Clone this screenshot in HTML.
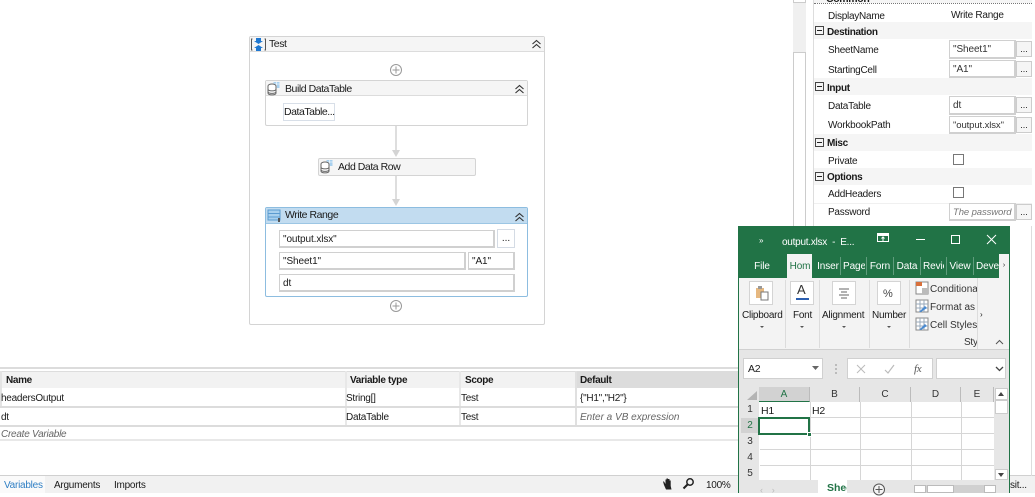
<!DOCTYPE html>
<html><head><meta charset="utf-8"><style>
html,body{margin:0;padding:0}
body{width:1035px;height:493px;overflow:hidden;background:#fff;position:relative;font-family:"Liberation Sans",sans-serif;font-size:10px;color:#1a1a1a}
.a{position:absolute;box-sizing:border-box}
.t{position:absolute;white-space:nowrap;line-height:14px;margin-top:1px;letter-spacing:-.25px}
.d{font-size:10.5px;letter-spacing:-.45px}
.b{font-weight:bold;letter-spacing:-.35px}
.inp{position:absolute;box-sizing:border-box;background:#fff;border:1px solid #d0d0d0;border-width:1px 2px 2px 1px;padding-left:3px;line-height:17px;white-space:nowrap;overflow:hidden;letter-spacing:-.1px}
.btn{position:absolute;box-sizing:border-box;background:#fafafa;border:1px solid #d4dbe4;text-align:center;line-height:14px}
.cat{position:absolute;left:814px;width:218px;background:#f5f5f5;height:17px}
.box{position:absolute;left:815px;width:9px;height:9px;border:1px solid #444;box-sizing:border-box}
.box:after{content:"";position:absolute;left:1px;top:3px;width:5px;height:1px;background:#222}
.chk{position:absolute;left:953px;width:11px;height:11px;border:1px solid #777;background:#fff;box-sizing:border-box}
.ab{position:absolute;left:1016px;width:16px;height:16px;box-sizing:border-box;background:#f5f5f5;border:1px solid #ccc;text-align:center;line-height:14px;font-size:9px}
.tab{position:absolute;top:255px;height:23px;color:#fff;line-height:23px;font-size:10px;white-space:nowrap;overflow:hidden;text-align:center;letter-spacing:-.1px}
.sep{position:absolute;width:1px;background:#5f9c7c;top:257px;height:18px}
.rb{position:absolute;top:281px;width:24px;height:24px;box-sizing:border-box;background:#fff;border:1px solid #d4d4d4}
.hl{position:absolute;left:760px;width:234px;height:1px;background:#d6d6d6}
.vl{position:absolute;top:402px;width:1px;height:78px;background:#d6d6d6}
.rh{position:absolute;left:741px;width:18px;height:15px;text-align:center;font-size:10px;line-height:15px;background:#e6e6e6;color:#333}
.ch{position:absolute;top:387px;height:15px;text-align:center;line-height:15px;font-size:10px;color:#333;background:#e6e6e6;border-right:1px solid #bbb;box-sizing:border-box}
</style></head><body>

<!-- Designer -->
<div class="a" style="left:249px;top:36px;width:296px;height:289px;border:1px solid #d4d4d4;border-radius:2px"></div>
<div class="a" style="left:250px;top:37px;width:294px;height:15px;background:#f5f5f5;border-bottom:1px solid #dcdcdc"></div>
<svg class="a" style="left:251px;top:37px" width="15" height="15"><path d="M1.500 2H0.500V13H1.500M13.500 2H14.500V13H13.500" stroke="#555" fill="none"/><path d="M5 1h5v3h2L7.500 7 3 4h2z M5 14v-3H3l4.500-3 4.500 3h-2v3z" fill="#1f78d1"/></svg>
<div class="t d" style="left:269px;top:36px">Test</div>
<svg class="a" style="left:531px;top:39px" width="11" height="10"><path d="M1.500 5L5.500 1.500 9.500 5M1.500 9L5.500 5.500 9.500 9" stroke="#333" fill="none" stroke-width="1.100"/></svg>
<svg class="a" style="left:389px;top:63px" width="14" height="14"><circle cx="7" cy="7" r="5.500" stroke="#999" fill="#fff"/><path d="M3.500 7h7M7 3.500v7" stroke="#999"/></svg>

<div class="a" style="left:265px;top:80px;width:263px;height:46px;border:1px solid #d4d4d4;border-radius:2px;background:#fff"></div>
<div class="a" style="left:266px;top:81px;width:261px;height:15px;background:#f5f5f5;border-bottom:1px solid #dcdcdc"></div>
<svg class="a" style="left:267px;top:81px" width="14" height="15"><rect x="6.500" y="1" width="6" height="6" fill="#a8d0ee"/><path d="M6.500 3h6M9.500 1v6" stroke="#fff" stroke-width=".6"/><ellipse cx="5" cy="5" rx="4" ry="2" fill="#fff" stroke="#666"/><path d="M1 5v7c0 2.500 8 2.500 8 0V5M1 8c0 2.500 8 2.500 8 0M1 10.500c0 2.500 8 2.500 8 0" stroke="#666" fill="#fff"/></svg>
<div class="t d" style="left:285px;top:81px">Build DataTable</div>
<svg class="a" style="left:514px;top:84px" width="11" height="10"><path d="M1.500 5L5.500 1.500 9.500 5M1.500 9L5.500 5.500 9.500 9" stroke="#333" fill="none" stroke-width="1.100"/></svg>
<div class="btn" style="left:283px;top:103px;width:52px;height:18px;line-height:17px;background:#fff;font-size:10.500px;border-color:#d8dfe8;letter-spacing:-.45px">DataTable...</div>

<div class="a" style="left:395px;top:126px;width:2px;height:26px;background:#dedede"></div>
<svg class="a" style="left:391px;top:149px" width="10" height="9"><path d="M1 1h8L5 8z" fill="#d4d4d4"/></svg>

<div class="a" style="left:318px;top:158px;width:158px;height:18px;background:#f5f5f5;border:1px solid #d4d4d4;border-radius:2px"></div>
<svg class="a" style="left:320px;top:159px" width="14" height="15"><rect x="6.500" y="1" width="6" height="6" fill="#a8d0ee"/><path d="M6.500 3h6M9.500 1v6" stroke="#fff" stroke-width=".6"/><ellipse cx="5" cy="5" rx="4" ry="2" fill="#fff" stroke="#666"/><path d="M1 5v7c0 2.500 8 2.500 8 0V5M1 8c0 2.500 8 2.500 8 0M1 10.500c0 2.500 8 2.500 8 0" stroke="#666" fill="#fff"/></svg>
<div class="t d" style="left:338px;top:159px">Add Data Row</div>

<div class="a" style="left:395px;top:176px;width:2px;height:24px;background:#dedede"></div>
<svg class="a" style="left:391px;top:198px" width="10" height="9"><path d="M1 1h8L5 8z" fill="#d4d4d4"/></svg>

<div class="a" style="left:265px;top:207px;width:263px;height:90px;border:1px solid #8dbde0;border-radius:2px;background:#fff"></div>
<div class="a" style="left:266px;top:208px;width:261px;height:16px;background:#c2dcf0;border-bottom:1px solid #9cc6e4"></div>
<svg class="a" style="left:267px;top:209px" width="14" height="14"><rect x="1" y="1" width="12" height="10" fill="#a8d0ee" stroke="#5b9bd0"/><path d="M1 4.500h12M1 8h12" stroke="#5b9bd0"/><rect x="11" y="9" width="2" height="4" fill="#555"/></svg>
<div class="t d" style="left:285px;top:207px">Write Range</div>
<svg class="a" style="left:514px;top:212px" width="11" height="10"><path d="M1.500 5L5.500 1.500 9.500 5M1.500 9L5.500 5.500 9.500 9" stroke="#333" fill="none" stroke-width="1.100"/></svg>
<div class="inp" style="left:279px;top:230px;width:216px;height:18px">"output.xlsx"</div>
<div class="btn" style="left:497px;top:229px;width:18px;height:19px;line-height:18px;background:#fff">...</div>
<div class="inp" style="left:279px;top:252px;width:187px;height:18px">"Sheet1"</div>
<div class="inp" style="left:468px;top:252px;width:47px;height:18px">"A1"</div>
<div class="inp" style="left:279px;top:274px;width:236px;height:18px">dt</div>
<svg class="a" style="left:389px;top:299px" width="14" height="14"><circle cx="7" cy="7" r="5.500" stroke="#999" fill="#fff"/><path d="M3.500 7h7M7 3.500v7" stroke="#999"/></svg>

<!-- Properties panel -->
<div class="a" style="left:793px;top:0;width:13px;height:250px;background:#f0f0f0"></div>
<div class="a" style="left:793px;top:52px;width:13px;height:200px;background:#fff;border:1px solid #ccc;border-bottom:0"></div>
<div class="a" style="left:793px;top:-5px;width:13px;height:8px;background:#fff;border:1px solid #ccc"></div>
<div class="a" style="left:813px;top:0;width:219px;height:226px;background:#fff;border-left:1px solid #ddd"></div>
<div class="a" style="left:814px;top:3px;width:218px;height:1px;border-top:1px dotted #777"></div>
<div class="cat" style="top:0;height:3px"></div>
<div class="t b" style="left:826px;top:-9px;font-size:10.500px">Common</div>

<div class="t" style="left:828px;top:9px">DisplayName</div>
<div class="t" style="left:951px;top:8px">Write Range</div>

<div class="cat" style="top:22px"></div><div class="box" style="top:26px"></div>
<div class="t b" style="left:827px;top:25px">Destination</div>
<div class="t" style="left:828px;top:43px">SheetName</div>
<div class="inp" style="left:949px;top:40px;width:67px;height:19px;line-height:18px;color:#333">"Sheet1"</div><div class="ab" style="top:41px">...</div>
<div class="t" style="left:828px;top:63px">StartingCell</div>
<div class="inp" style="left:949px;top:60px;width:67px;height:18px;line-height:17px;color:#333">"A1"</div><div class="ab" style="top:61px">...</div>
<div class="cat" style="top:78px"></div><div class="box" style="top:82px"></div>
<div class="t b" style="left:827px;top:81px">Input</div>
<div class="t" style="left:828px;top:99px">DataTable</div>
<div class="inp" style="left:949px;top:96px;width:67px;height:19px;line-height:18px;color:#333">dt</div><div class="ab" style="top:97px">...</div>
<div class="t" style="left:828px;top:118px">WorkbookPath</div>
<div class="inp" style="left:949px;top:116px;width:67px;height:18px;line-height:17px;color:#333;font-size:9.500px">"output.xlsx"</div><div class="ab" style="top:117px">...</div>
<div class="cat" style="top:134px"></div><div class="box" style="top:138px"></div>
<div class="t b" style="left:827px;top:136px">Misc</div>
<div class="t" style="left:828px;top:154px">Private</div>
<div class="chk" style="top:154px"></div>
<div class="cat" style="top:168px"></div><div class="box" style="top:172px"></div>
<div class="t b" style="left:827px;top:170px">Options</div>
<div class="t" style="left:828px;top:187px">AddHeaders</div>
<div class="chk" style="top:187px"></div>
<div class="a" style="left:814px;top:203px;width:218px;height:1px;background:#f0f0f0"></div>
<div class="t" style="left:828px;top:205px">Password</div>
<div class="inp" style="left:949px;top:203px;width:67px;height:18px;line-height:17px;font-style:italic;color:#777;font-size:9.500px">The password</div><div class="ab" style="top:204px">...</div>

<!-- Variables panel -->
<div class="a" style="left:0;top:367px;width:740px;height:2px;background:#dcdcdc"></div>
<div class="a" style="left:0;top:371px;width:740px;height:17px;background:#f2f2f2;border-top:1px solid #ddd"></div>
<div class="a" style="left:575px;top:371px;width:165px;height:17px;background:#dcdcdc"></div>
<div class="a" style="left:0;top:371px;width:2px;height:35px;background:#e4e4e4"></div>
<div class="t b" style="left:6px;top:373px">Name</div>
<div class="t b" style="left:350px;top:373px">Variable type</div>
<div class="t b" style="left:465px;top:373px">Scope</div>
<div class="t b" style="left:580px;top:373px">Default</div>
<div class="a" style="left:345px;top:371px;width:2px;height:55px;background:#e8e8e8"></div>
<div class="a" style="left:459px;top:371px;width:2px;height:55px;background:#e8e8e8"></div>
<div class="a" style="left:575px;top:371px;width:2px;height:55px;background:#e0e0e0"></div>
<div class="a" style="left:0;top:406px;width:740px;height:2px;background:#dcdcdc"></div>
<div class="a" style="left:0;top:425px;width:740px;height:2px;background:#dcdcdc"></div>
<div class="a" style="left:0;top:439px;width:740px;height:2px;background:#e8e8e8"></div>
<div class="t" style="left:1px;top:391px">headersOutput</div>
<div class="t" style="left:346px;top:391px">String[]</div>
<div class="t" style="left:461px;top:391px">Test</div>
<div class="t" style="left:580px;top:391px">{"H1","H2"}</div>
<div class="t" style="left:1px;top:410px">dt</div>
<div class="t" style="left:346px;top:410px">DataTable</div>
<div class="t" style="left:461px;top:410px">Test</div>
<div class="t" style="left:580px;top:410px;font-style:italic;color:#666;letter-spacing:0">Enter a VB expression</div>
<div class="t" style="left:1px;top:427px;font-style:italic;color:#666">Create Variable</div>

<div class="a" style="left:0;top:475px;width:1035px;height:18px;background:#f1f1f1;border-top:1px solid #d0d0d0"></div>
<div class="a" style="left:0;top:476px;width:45px;height:17px;background:#fafafa"></div>
<div class="t" style="left:4px;top:477.500px;color:#2f7fc4">Variables</div>
<div class="t" style="left:54px;top:477.500px">Arguments</div>
<div class="t" style="left:114px;top:477.500px">Imports</div>
<svg class="a" style="left:661px;top:477px" width="14" height="14"><path d="M3 8L2 4.500l1 0 1.500 2.500V2.500h1v3.500-4.500h1.500v4.500-4h1.500v4.500-3h1.200v5.500L10.500 12.500H5z" fill="#222"/></svg>
<svg class="a" style="left:682px;top:477px" width="13" height="13"><circle cx="8" cy="5" r="3.200" fill="none" stroke="#222" stroke-width="1.500"/><path d="M5.500 7.500L1.500 11.500" stroke="#222" stroke-width="2"/></svg>
<div class="t" style="left:706px;top:477.500px">100%</div>
<div class="t" style="left:1010px;top:477.500px">sit...</div>
<div class="a" style="left:1031px;top:226px;width:1px;height:250px;background:#ddd"></div>

<!-- Excel window -->
<div class="a" style="left:738px;top:226px;width:272px;height:267px;background:#e6e6e6;border:1px solid #217346"></div>
<div class="a" style="left:739px;top:227px;width:270px;height:51px;background:#217346"></div>
<div class="t" style="left:759px;top:233px;color:#fff;font-size:8px">&#187;</div>
<div class="t" style="left:782px;top:235px;color:#fff;font-size:10px">output.xlsx &nbsp;-&nbsp; E...</div>
<svg class="a" style="left:877px;top:233px" width="12" height="10"><rect x=".5" y=".5" width="11" height="8" fill="none" stroke="#fff"/><rect x="1" y="1" width="10" height="2" fill="#fff"/><path d="M6 8V4M4.500 5.500L6 4l1.500 1.500" stroke="#fff" fill="none"/></svg>
<div class="a" style="left:916px;top:239px;width:9px;height:1px;background:#fff"></div>
<div class="a" style="left:951px;top:235px;width:9px;height:9px;border:1px solid #fff"></div>
<svg class="a" style="left:986px;top:234px" width="11" height="11"><path d="M1 1l9 9M10 1l-9 9" stroke="#fff"/></svg>

<div class="tab" style="left:752px;width:20px">File</div>
<div class="a" style="left:787px;top:254px;width:25px;height:28px;background:#f3f3f3"></div>
<div class="tab" style="left:788px;width:24px;color:#217346">Hom</div>
<div class="tab" style="left:816px;width:24px">Inser</div><div class="sep" style="left:840px"></div>
<div class="tab" style="left:843px;width:22px">Page</div><div class="sep" style="left:866px"></div>
<div class="tab" style="left:869px;width:22px">Forn</div><div class="sep" style="left:893px"></div>
<div class="tab" style="left:896px;width:22px">Data</div><div class="sep" style="left:920px"></div>
<div class="tab" style="left:923px;width:21px">Revie</div><div class="sep" style="left:946px"></div>
<div class="tab" style="left:949px;width:22px">View</div><div class="sep" style="left:973px"></div>
<div class="tab" style="left:976px;width:23px">Deve</div>
<div class="a" style="left:999px;top:254px;width:10px;height:24px;background:#f3f3f3;font-size:7px;text-align:center;line-height:24px">&#8250;</div>

<div class="a" style="left:739px;top:278px;width:270px;height:72px;background:#f3f3f3;border-bottom:1px solid #d0d0d0"></div>
<div class="a" style="left:739px;top:350px;width:270px;height:8px;background:#e6e6e6"></div>
<div class="rb" style="left:749px"></div>
<svg class="a" style="left:755px;top:285px" width="14" height="16"><rect x="1" y="3" width="8" height="10" fill="#e6b880"/><rect x="3" y="1" width="4" height="3" fill="#999"/><rect x="6" y="7" width="7" height="8" fill="#fff" stroke="#777"/></svg>
<div class="rb" style="left:790px"></div>
<div class="t" style="left:797px;top:282px;font-size:13px;color:#333">A</div>
<div class="a" style="left:796px;top:298px;width:13px;height:2px;background:#2b5fb0"></div>
<div class="rb" style="left:832px"></div>
<svg class="a" style="left:838px;top:287px" width="12" height="12"><path d="M1 2h10M3 5h6M1 8h10M3 11h6" stroke="#666"/></svg>
<div class="rb" style="left:877px"></div>
<div class="t" style="left:883px;top:286px;font-size:11px;color:#444">%</div>
<div class="t" style="left:742px;top:308px;font-size:10px">Clipboard</div>
<div class="t" style="left:793px;top:308px;font-size:10px">Font</div>
<div class="t" style="left:822px;top:308px;font-size:10px">Alignment</div>
<div class="t" style="left:872px;top:308px;font-size:10px">Number</div>
<svg class="a" style="left:0;top:0;pointer-events:none" width="1035" height="493"><path d="M760 326l2 2 2-2zM800 326l2 2 2-2zM842 326l2 2 2-2zM887 326l2 2 2-2z" fill="#555"/></svg>
<div class="a" style="left:785px;top:280px;width:1px;height:68px;background:#dcdcdc"></div>
<div class="a" style="left:819px;top:280px;width:1px;height:68px;background:#dcdcdc"></div>
<div class="a" style="left:869px;top:280px;width:1px;height:68px;background:#dcdcdc"></div>
<div class="a" style="left:909px;top:280px;width:1px;height:68px;background:#dcdcdc"></div>
<div class="a" style="left:977px;top:278px;width:1px;height:71px;background:#dcdcdc"></div>
<svg class="a" style="left:915px;top:281px" width="14" height="14"><rect x="1" y="1" width="12" height="12" fill="#fff" stroke="#888"/><rect x="1" y="1" width="6" height="4" fill="#d8703c"/><rect x="7" y="7" width="6" height="6" fill="#bbb"/></svg>
<svg class="a" style="left:915px;top:299px" width="14" height="14"><rect x="1" y="1" width="12" height="12" fill="#fff" stroke="#888"/><path d="M1 5h12M1 9h12M5 1v12M9 1v12" stroke="#9ab"/><path d="M4 13l6-6 2 2-6 4z" fill="#4a8ad0"/></svg>
<svg class="a" style="left:915px;top:317px" width="14" height="14"><rect x="1" y="1" width="12" height="12" fill="#fff" stroke="#888"/><path d="M1 5h12M1 9h12M5 1v12M9 1v12" stroke="#9ab"/><path d="M4 13l6-6 2 2-6 4z" fill="#4a8ad0"/></svg>
<div style="position:absolute;left:930px;top:281px;width:47px;height:50px;overflow:hidden;font-size:10px;line-height:18px;white-space:nowrap;color:#333">Conditional<br>Format as T<br>Cell Styles &#9662;</div>
<div class="t" style="left:964px;top:335px;font-size:10px;width:13px;overflow:hidden;color:#333">Styl</div>
<div class="t" style="left:980px;top:307px;font-size:8px">&#8250;</div>
<svg class="a" style="left:995px;top:339px" width="9" height="6"><path d="M1 5l3.500-3.500L8 5" stroke="#555" fill="none"/></svg>

<!-- formula bar -->
<div class="a" style="left:743px;top:358px;width:80px;height:21px;background:#fff;border:1px solid #d0d0d0"></div>
<div class="t" style="left:748px;top:361px;font-size:10.500px">A2</div>
<svg class="a" style="left:812px;top:366px" width="8" height="5"><path d="M0 0h7L3.500 4z" fill="#666"/></svg>
<div class="a" style="left:835px;top:364px;width:1px;height:10px;border-left:2px dotted #bbb"></div>
<div class="a" style="left:847px;top:358px;width:86px;height:21px;background:#fff;border:1px solid #d0d0d0"></div>
<svg class="a" style="left:855px;top:363px" width="50" height="12"><path d="M2 2l8 8M10 2l-8 8" stroke="#bbb"/><path d="M30 7l3 3 6-8" stroke="#bbb" fill="none" stroke-width="1.200"/></svg>
<div class="t" style="left:914px;top:361px;font-style:italic;font-family:'Liberation Serif',serif;font-size:11px;color:#555">fx</div>
<div class="a" style="left:936px;top:358px;width:70px;height:21px;background:#fff;border:1px solid #d0d0d0"></div>
<svg class="a" style="left:995px;top:366px" width="9" height="6"><path d="M1 1l3.500 3.500L8 1" stroke="#444" fill="none" stroke-width="1.300"/></svg>

<!-- grid -->
<div class="a" style="left:741px;top:387px;width:18px;height:15px;background:#e6e6e6"></div>
<svg class="a" style="left:745px;top:390px" width="13" height="11"><path d="M12 1v9H2z" fill="#b4b4b4"/></svg>
<div class="ch" style="left:759px;width:51px;background:#d2d2d2;border-bottom:1px solid #217346;color:#217346">A</div>
<div class="ch" style="left:810px;width:50px">B</div>
<div class="ch" style="left:860px;width:51px">C</div>
<div class="ch" style="left:911px;width:50px">D</div>
<div class="ch" style="left:961px;width:33px">E</div>
<div class="a" style="left:759px;top:402px;width:235px;height:78px;background:#fff"></div>
<div class="hl" style="top:417px"></div><div class="hl" style="top:433px"></div><div class="hl" style="top:449px"></div><div class="hl" style="top:465px"></div>
<div class="vl" style="left:810px"></div><div class="vl" style="left:860px"></div><div class="vl" style="left:911px"></div><div class="vl" style="left:961px"></div>
<div class="rh" style="top:402px">1</div>
<div class="rh" style="top:418px;background:#d2d2d2;color:#217346">2</div>
<div class="rh" style="top:434px">3</div>
<div class="rh" style="top:450px">4</div>
<div class="rh" style="top:466px;height:14px">5</div>
<div class="t" style="left:761px;top:403px;font-size:10.500px">H1</div>
<div class="t" style="left:812px;top:403px;font-size:10.500px">H2</div>
<div class="a" style="left:758px;top:417px;width:52px;height:18px;border:2px solid #217346"></div>
<div class="a" style="left:807px;top:432px;width:5px;height:5px;background:#217346;border:1px solid #fff"></div>
<!-- v scrollbar -->
<div class="a" style="left:994px;top:385px;width:15px;height:95px;background:#e6e6e6"></div>
<div class="a" style="left:995px;top:388px;width:13px;height:12px;background:#fff;border:1px solid #ccc"></div>
<svg class="a" style="left:998px;top:392px" width="6" height="4"><path d="M0 4h6L3 0z" fill="#444"/></svg>
<div class="a" style="left:995px;top:400px;width:13px;height:14px;background:#fff;border:1px solid #ccc"></div>
<div class="a" style="left:995px;top:469px;width:13px;height:11px;background:#fff;border:1px solid #ccc"></div>
<svg class="a" style="left:998px;top:473px" width="6" height="4"><path d="M0 0h6L3 4z" fill="#444"/></svg>
<!-- sheet tabs -->
<div class="a" style="left:739px;top:480px;width:270px;height:13px;background:#e6e6e6"></div>
<div class="a" style="left:818px;top:479px;width:29px;height:14px;background:#fff"></div>
<div class="t b" style="left:827px;top:480px;color:#217346;font-size:10.500px;width:20px;overflow:hidden;letter-spacing:0">Sheet1</div>
<svg class="a" style="left:872px;top:483px" width="14" height="13"><circle cx="7" cy="6.500" r="5.500" stroke="#555" fill="#f4f4f4"/><path d="M3.500 6.500h7M7 3v7" stroke="#555"/></svg>
<div class="t" style="left:760px;top:482px;font-size:9px;color:#bbb">&#8249; &nbsp; &nbsp;&#8250;</div>
<div class="a" style="left:914px;top:485px;width:70px;height:8px;background:#d0d0d0"></div>
<div class="a" style="left:914px;top:485px;width:12px;height:8px;background:#fff;border:1px solid #bbb"></div>
<div class="a" style="left:927px;top:485px;width:27px;height:8px;background:#fff;border:1px solid #bbb"></div>
<div class="a" style="left:984px;top:485px;width:12px;height:8px;background:#fff;border:1px solid #bbb"></div>

</body></html>
